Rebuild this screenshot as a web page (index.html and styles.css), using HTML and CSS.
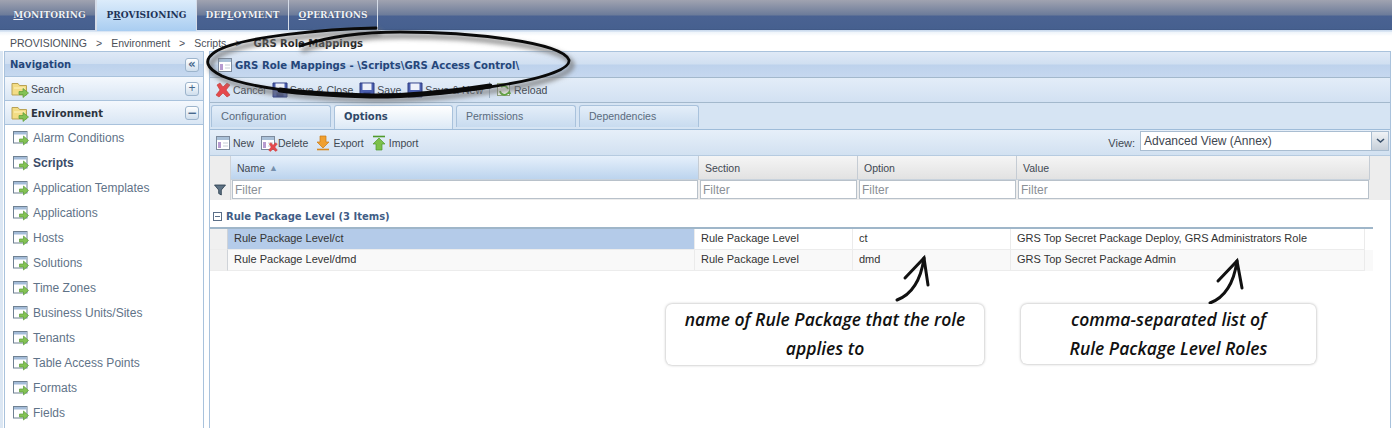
FILE: index.html
```html
<!DOCTYPE html>
<html lang="en">
<head>
<meta charset="utf-8">
<title>GRS Role Mappings</title>
<link rel="stylesheet" href="styles.css">
</head>
<body>
<svg width="0" height="0" class="defs">
  <defs>
    <symbol id="i-item" viewBox="0 0 16 16">
      <rect x="0.500" y="1.500" width="13.500" height="11.500" fill="#fff" stroke="#6f8192"/>
      <rect x="1" y="2" width="12.500" height="2.500" fill="#a4bcd9"/>
      <path d="M6.500 9h4V6l5 4.500-5 4.500v-3h-4z" fill="#84c255" stroke="#5a9c36" stroke-width="0.700"/>
    </symbol>
    <symbol id="i-folder" viewBox="0 0 18 18">
      <path d="M1 3.500h6l1.500 2h7v9.500H1z" fill="#f3dc84" stroke="#b9a255"/>
      <path d="M3 8h11" stroke="#fff3c0"/>
      <path d="M8 11.500h4V8.500l5.500 4.500-5.500 4.500v-3H8z" fill="#84c255" stroke="#5a9c36" stroke-width="0.700"/>
    </symbol>
    <symbol id="i-doc" viewBox="0 0 16 16">
      <rect x="1.500" y="1.500" width="13" height="13" fill="#fff" stroke="#7c8a9c"/>
      <rect x="2" y="2" width="12" height="3" fill="#a9c0d8"/>
      <rect x="3" y="7" width="3" height="6" fill="#b79bd0"/>
      <path d="M8 8h5M8 11h5" stroke="#c5ccd5"/>
    </symbol>
    <symbol id="i-del" viewBox="0 0 16 16">
      <path d="M2 3l3-2 3 4 4-4 3 2-4 5 4 5-3 2-4-4-4 4-3-2 4-5z" fill="#e5484d" stroke="#c0392b" stroke-width="0.600"/>
    </symbol>
    <symbol id="i-save" viewBox="0 0 16 16">
      <path d="M1 1h14v14H1z" fill="#4a5fb0" stroke="#2e3d80"/>
      <rect x="3.500" y="1.500" width="9" height="6.500" fill="#eef1fa"/>
      <rect x="4.500" y="10.500" width="7" height="4.500" fill="#2e3d80"/>
    </symbol>
    <symbol id="i-reload" viewBox="0 0 16 16">
      <rect x="1.500" y="1.500" width="12" height="12" fill="#f4f7f1" stroke="#8ea07e"/>
      <path d="M4 9a4.500 4.500 0 0 0 8 2M12 7a4.500 4.500 0 0 0-7-2" fill="none" stroke="#5da73b" stroke-width="1.800"/>
      <path d="M13.500 8l-3 4h4.500z" fill="#5da73b"/>
    </symbol>
  </defs>
</svg>

<header class="topnav">
  <a class="tab"><u>M</u>ONITORING</a>
  <a class="tab active">P<u>R</u>OVISIONING</a>
  <a class="tab">DEP<u>L</u>OYMENT</a>
  <a class="tab"><u>O</u>PERATIONS</a>
</header>

<nav class="crumbs">
  <span>PROVISIONING</span><span class="sep">&gt;</span><span>Environment</span><span class="sep">&gt;</span><span>Scripts</span><span class="sep">&gt;</span><b>GRS Role Mappings</b>
</nav>

<div class="layout">
  <aside class="sidebar">
    <div class="side-head"><span>Navigation</span><button class="mini">«</button></div>
    <div class="acc"><svg class="ic18"><use href="#i-folder"/></svg><span>Search</span><button class="mini">+</button></div>
    <div class="acc strong"><svg class="ic18"><use href="#i-folder"/></svg><span>Environment</span><button class="mini">−</button></div>
    <ul class="side-list">
      <li><svg class="ic16"><use href="#i-item"/></svg>Alarm Conditions</li>
      <li class="cur"><svg class="ic16"><use href="#i-item"/></svg>Scripts</li>
      <li><svg class="ic16"><use href="#i-item"/></svg>Application Templates</li>
      <li><svg class="ic16"><use href="#i-item"/></svg>Applications</li>
      <li><svg class="ic16"><use href="#i-item"/></svg>Hosts</li>
      <li><svg class="ic16"><use href="#i-item"/></svg>Solutions</li>
      <li><svg class="ic16"><use href="#i-item"/></svg>Time Zones</li>
      <li><svg class="ic16"><use href="#i-item"/></svg>Business Units/Sites</li>
      <li><svg class="ic16"><use href="#i-item"/></svg>Tenants</li>
      <li><svg class="ic16"><use href="#i-item"/></svg>Table Access Points</li>
      <li><svg class="ic16"><use href="#i-item"/></svg>Formats</li>
      <li><svg class="ic16"><use href="#i-item"/></svg>Fields</li>
    </ul>
  </aside>

  <main class="panel">
    <div class="panel-title"><svg class="ic16"><use href="#i-doc"/></svg><span>GRS Role Mappings - \Scripts\GRS Access Control\</span></div>
    <div class="toolbar">
      <span class="tool"><svg class="ic16"><use href="#i-del"/></svg>Cancel</span>
      <span class="tool"><svg class="ic16"><use href="#i-save"/></svg>Save &amp; Close</span>
      <span class="tool"><svg class="ic16"><use href="#i-save"/></svg>Save</span>
      <span class="tool"><svg class="ic16"><use href="#i-save"/></svg>Save &amp; New</span>
      <span class="divider"></span>
      <span class="tool"><svg class="ic16"><use href="#i-reload"/></svg>Reload</span>
    </div>
    <div class="tabs">
      <span class="ptab">Configuration</span>
      <span class="ptab on">Options</span>
      <span class="ptab">Permissions</span>
      <span class="ptab">Dependencies</span>
    </div>
    <div class="gridbar">
      <span class="tool"><svg class="ic16"><use href="#i-doc"/></svg>New</span>
      <span class="tool del"><span class="stack"><svg class="ic16"><use href="#i-doc"/></svg><svg class="ic10"><use href="#i-del"/></svg></span>Delete</span>
      <span class="tool"><svg class="ic16" viewBox="0 0 16 16"><path d="M5 1h6v6h3l-6 6-6-6h3z" fill="#f0a030" stroke="#c97a14" stroke-width="0.700"/><path d="M2 14.500h12" stroke="#d98a20" stroke-width="1.600"/></svg>Export</span>
      <span class="tool"><svg class="ic16" viewBox="0 0 16 16"><path d="M2 1.500h12" stroke="#4f9a2c" stroke-width="1.600"/><path d="M8 3l6 6h-3v6H5V9H2z" fill="#7cc04a" stroke="#4f9a2c" stroke-width="0.700"/></svg>Import</span>
      <span class="view-label">View:</span>
      <div class="select"><span>Advanced View (Annex)</span><i class="caret"><svg width="9" height="6" viewBox="0 0 9 6"><path d="M1 1l3.500 3L8 1" fill="none" stroke="#39506b" stroke-width="1.600"/></svg></i></div>
    </div>

    <div class="cols heads">
      <div class="gut"></div>
      <div class="hc name">Name <span class="arrow">▲</span></div>
      <div class="hc">Section</div>
      <div class="hc">Option</div>
      <div class="hc">Value</div>
      <div class="tail"></div>
    </div>
    <div class="cols filters">
      <div class="gut"><svg width="12" height="12" viewBox="0 0 12 12"><path d="M0.500 1h11L7.300 6v5L4.700 9.500V6z" fill="#5d7183" stroke="#25384a" stroke-width="0.800"/></svg></div>
      <div class="fc"><span class="input">Filter</span></div>
      <div class="fc"><span class="input">Filter</span></div>
      <div class="fc"><span class="input">Filter</span></div>
      <div class="fc"><span class="input">Filter</span></div>
      <div class="tail"></div>
    </div>

    <div class="group"><span class="box"></span>Rule Package Level (3 Items)</div>
    <div class="rows">
      <div class="cols row sel">
        <div class="gut"></div><div class="c first">Rule Package Level/ct</div><div class="c">Rule Package Level</div><div class="c">ct</div><div class="c">GRS Top Secret Package Deploy, GRS Administrators Role</div>
      </div>
      <div class="cols row alt">
        <div class="gut"></div><div class="c first">Rule Package Level/dmd</div><div class="c">Rule Package Level</div><div class="c">dmd</div><div class="c">GRS Top Secret Package Admin</div>
      </div>
    </div>
  </main>
</div>

<svg class="overlay" width="1392" height="428" viewBox="0 0 1392 428">
  <defs>
    <filter id="soft" x="-5%" y="-20%" width="110%" height="140%"><feGaussianBlur stdDeviation="2.500"/></filter>
  </defs>
  <path class="ring-shadow" d="M376 28C330 29 240 36 215 52C203 60 206 68 222 76C250 88 310 95 370 96C440 97 572 80 569 60C562 42 470 32 400 32C360 32 330 36 300 46" filter="url(#soft)" transform="translate(3 4)"/>
  <path class="ring" d="M376 28C330 29 240 36 215 52C203 60 206 68 222 76C250 88 310 95 370 96C440 97 572 80 569 60C562 42 470 32 400 32C360 32 330 36 300 46"/>
  <path class="ring-thick" d="M280 90C310 94 340 95 370 96C410 96.500 450 92 490 86"/>
  <g class="arrows">
    <path d="M897 300C913 294 921 279 924 258"/>
    <path d="M905 278L924 258L928 285"/>
    <path d="M1210 303C1226 297 1234 282 1237 261"/>
    <path d="M1218 281L1237 261L1242 288"/>
  </g>
</svg>
<div class="note note-a">name of Rule Package that the role<br>applies to</div>
<div class="note note-b">comma-separated list of<br>Rule Package Level Roles</div>
</body>
</html>
```
FILE: styles.css
```css
* { box-sizing: border-box; }
html, body { margin: 0; height: 428px; overflow: hidden; }
body { background: #fff; font-family: "Liberation Sans", Arial, sans-serif; font-size: 12px; color: #333; position: relative; }
.defs { position: absolute; }
button { font: inherit; padding: 0; }

.topnav { display: flex; height: 32px; padding-left: 4px; background: linear-gradient(#a0a3b0 0, #6c7b9a 15px, #4a6292 16px, #46608f 29px, #3d5480 30px, #c8d8ec 30px, #dfe9f6 32px); }
.tab { width: 92px; height: 31px; display: flex; align-items: center; justify-content: center; padding-bottom: 2px; border-right: 1px solid #d5dce8; font: bold 9px "DejaVu Serif", serif; color: #eef1f6; text-shadow: 0 0 1px rgba(30, 40, 70, 0.8); }
.tab:nth-child(2) { width: 101px; }
.tab:nth-child(3) { width: 92px; }
.tab:nth-child(4) { width: 89px; }
.tab.active { background: linear-gradient(#dcecfb, #a9cdf1); color: #1e3358; border-left: 1px solid #d5dce8; text-shadow: none; }

.crumbs { height: 19px; display: flex; align-items: center; padding: 3px 0 0 10px; font-size: 10.500px; color: #4a4f58; white-space: nowrap; background: linear-gradient(#eef4fa, #fff 4px); }
.crumbs .sep { margin: 0 9px; }
.crumbs b { color: #1f1f1f; font-family: "DejaVu Sans", sans-serif; font-size: 10px; margin-left: 3px; }

.layout { display: flex; gap: 5px; padding-left: 4px; height: 377px; background: linear-gradient(90deg, #dce7f3 3px, transparent 3px); }
.sidebar { width: 200px; flex: none; border: 1px solid #a9c2dc; border-bottom: 0; background: #fff; }
.side-head { height: 25px; display: flex; align-items: center; justify-content: space-between; padding: 1px 4px 0 5px; background: linear-gradient(#dfe9f6 0, #d0dff1 48%, #bdd2ec 52%, #c6d8ef 100%); border-bottom: 1px solid #a9c2dc; font: bold 10px "DejaVu Sans", sans-serif; color: #25467a; }
.mini { width: 14px; height: 14px; border: 1px solid #9cb4cc; border-radius: 3px; background: linear-gradient(#fff, #cfdeed); color: #47688c; font-size: 12px; line-height: 11px; text-align: center; }
.acc { height: 24px; display: flex; align-items: center; padding: 0 4px 0 6px; gap: 2px; background: linear-gradient(#f4f8fd, #d9e6f4); border-bottom: 1px solid #a9c2dc; font-size: 10.500px; color: #3d4550; }
.acc span { flex: 1; }
.acc.strong { padding-top: 1px; font: bold 10px "DejaVu Sans", sans-serif; color: #2c3440; }
.ic18 { width: 18px; height: 18px; flex: none; }
.ic16 { width: 16px; height: 16px; flex: none; }
.ic10 { width: 10px; height: 10px; }
.side-list { list-style: none; margin: 0; padding: 0 0 0 8px; }
.side-list li { height: 25px; display: flex; align-items: center; gap: 4px; font-size: 12px; color: #5f7388; white-space: nowrap; }
.side-list li.cur { font-weight: bold; color: #3b4c68; }

.panel { flex: 1; min-width: 0; margin-right: 1px; border: 1px solid #a9c2dc; border-bottom: 0; }
.panel-title { height: 26px; display: flex; align-items: center; gap: 2px; padding: 1px 0 0 7px; background: linear-gradient(#dfe9f6 0, #d0dff1 48%, #bdd2ec 52%, #c6d8ef 100%); border-bottom: 1px solid #a3b8cc; font: bold 10.150px "DejaVu Sans", sans-serif; color: #25467a; }
.toolbar { height: 25px; display: flex; align-items: center; padding-left: 5px; gap: 6px; background: linear-gradient(#e3edf8, #d2e1f2); border-bottom: 1px solid #a3b8cc; }
.tool { display: inline-flex; align-items: center; gap: 2px; font-size: 10.500px; color: #3f4852; white-space: nowrap; }
.divider { width: 1px; height: 16px; background: #9fb3c8; margin: 0; }
.tabs { height: 27px; display: flex; align-items: flex-end; gap: 3px; padding: 0 0 2px 1px; background: #d6e4f3; border-bottom: 1px solid #9fbcd9; }
.ptab { width: 120px; height: 22px; padding: 4px 0 0 9px; border: 1px solid #a9c2dc; border-bottom: 0; border-radius: 3px 3px 0 0; background: linear-gradient(#e4eef9, #c8dbef); font-size: 10.500px; color: #5a6b7d; }
.ptab.on { width: 119px; height: 24px; margin-bottom: -2px; padding: 5px 0 0 9px; background: linear-gradient(#fff, #dce9f6); font: bold 10px "DejaVu Sans", sans-serif; color: #2f4868; }
.ptab:nth-child(1) { font-size: 11px; }
.gridbar { height: 26px; display: flex; align-items: center; padding: 0 1px 0 5px; gap: 3px; background: linear-gradient(#e6eff9, #d2e1f1); border-bottom: 1px solid #b6cbe0; }
.gridbar .tool + .tool { margin-left: 3px; }
.gridbar .del + .tool, .gridbar .del + .tool + .tool { margin-left: 4px; }
.stack { position: relative; display: inline-flex; width: 16px; height: 16px; }
.stack .ic10 { position: absolute; right: -2px; bottom: -1px; }
.view-label { margin-left: auto; font-size: 11px; color: #3f4852; padding-right: 2px; }
.select { width: 249px; height: 20px; margin-bottom: 4px; display: flex; border: 1px solid #a9bdd1; background: #fff; font-size: 12px; color: #3e4650; }
.select span { flex: 1; padding: 2px 0 0 3px; }
.caret { width: 17px; display: flex; align-items: center; justify-content: center; background: linear-gradient(#f0f3f6, #c6cfd9); border-left: 1px solid #a9bdd1; }

.cols { display: grid; grid-template-columns: 21px 468px 159px 159px 353px 1fr; }
.gut { background: #ededed; display: flex; align-items: center; justify-content: center; border-right: 1px solid #cfd3d8; }
.heads { height: 24px; }
.hc { display: flex; align-items: center; gap: 4px; padding-left: 6px; font-size: 10.500px; color: #3f4852; background: linear-gradient(#f5f5f5, #e2e2e2); border-right: 1px solid #c5ccd4; border-bottom: 1px solid #c8d2dc; }
.hc.name { padding-left: 6px; background: linear-gradient(#e6f0fb, #bcd4ee); }
.arrow { font-size: 9px; color: #7690ad; }
.tail { background: #ededed; }
.filters { height: 20px; background: #ededed; }
.fc { padding: 0 1px 0 1px; }
.input { display: block; height: 19px; padding: 2px 0 0 2px; border: 1px solid #b8c1ca; background: #fff; color: #8a9096; font-size: 12px; }
.group { height: 27px; display: flex; align-items: center; gap: 4px; padding: 6px 0 0 3px; font: bold 10px "DejaVu Sans", sans-serif; color: #3f5d86; }
.box { width: 9px; height: 9px; border: 1px solid #5b6f88; background: linear-gradient(#5b6f88, #5b6f88) center/5px 1px no-repeat #fff; }
.rows { margin-right: 17px; border-top: 2px solid #9fb6c9; }
.row { height: 21px; grid-template-columns: 18px 467px 158px 158px 354px 1fr; font-size: 11px; color: #333; }
.row .c { display: flex; align-items: center; padding: 0 0 2px 6px; border-right: 1px solid #ebebeb; border-bottom: 1px solid #ececec; white-space: nowrap; }
.row .gut { background: #f0f0f0; border-bottom: 1px solid #ececec; }
.row .first { padding-left: 6px; }
.row.sel .first { background: #b4cbe9; }
.row.alt { background: #f9f9f9; }

.overlay { position: absolute; left: 0; top: 0; pointer-events: none; }
.ring, .ring-shadow, .ring-thick { fill: none; stroke-linecap: round; }
.ring { stroke: #0a0a0a; stroke-width: 2.800; }
.ring-thick { stroke: #0a0a0a; stroke-width: 5; }
.ring-shadow { stroke: #777; stroke-width: 4; }
.arrows { fill: none; stroke: #111; stroke-width: 3; stroke-linecap: round; }
.note { position: absolute; background: #fff; border-radius: 6px; box-shadow: 0 0 3px rgba(0, 0, 0, 0.35); text-align: center; font: italic 600 17.500px/29px "Open Sans", "DejaVu Sans", sans-serif; color: #111; }
.note-a { left: 666px; top: 304px; width: 318px; height: 61px; padding-top: 1px; }
.note-b { left: 1021px; top: 304px; width: 295px; height: 60px; padding-top: 1px; }
```
